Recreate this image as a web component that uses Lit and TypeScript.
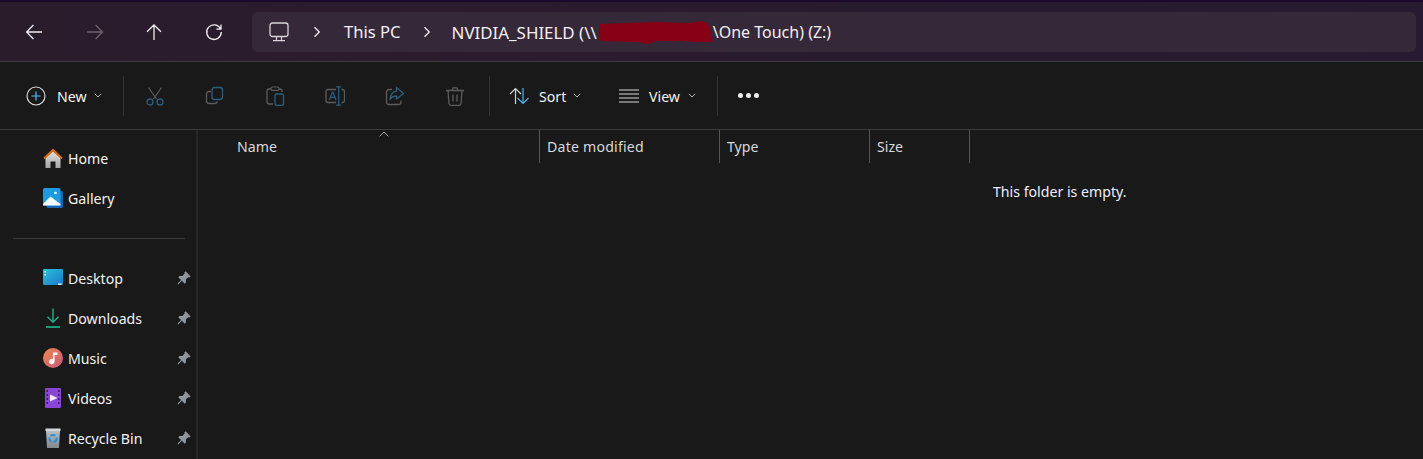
import { LitElement, html, css, svg } from 'lit';
import { customElement } from 'lit/decorators.js';

const GREY = '#5c5c5c';
const TEAL = '#2b5f80';

const icon = (size: number, body: unknown) => html`<svg width=${size} height=${size} viewBox="0 0 ${size} ${size}" fill="none">${body}</svg>`;

const chevDown = html`<svg class="chev" width="8" height="5" viewBox="0 0 8 5" fill="none"><path d="M.8.8 4 4l3.2-3.2" stroke="#b5b5b5" stroke-width="1"/></svg>`;
const crumb = html`<svg class="crumb" width="8" height="12" viewBox="0 0 8 12" fill="none"><path d="M1.5 1.2 6.3 6l-4.8 4.8" stroke="#f0edf0" stroke-width="1.3"/></svg>`;

const navIcons = {
  back: svg`<path d="M2.600 10H18M9.400 3 2.600 10l6.800 7" stroke="currentColor" stroke-width="1.300"/>`,
  forward: svg`<path d="M18.400 10H3M11.600 3l6.800 7-6.800 7" stroke="currentColor" stroke-width="1.300"/>`,
  up: svg`<path d="M10 18V3M3 9.800 10 3l7 6.800" stroke="currentColor" stroke-width="1.300"/>`,
  refresh: svg`<path d="M16.600 7A7.300 7.300 0 1 0 17.300 10M17 2.600V7.200h-4.600" stroke="currentColor" stroke-width="1.300"/>`,
};

const toolIcons = {
  cut: svg`<path d="M3.500 1.500 11.500 13M16.500 1.500 8.500 13" stroke=${GREY} stroke-width="1.200"/><circle cx="5" cy="16" r="3" stroke=${TEAL} stroke-width="1.300"/><circle cx="15" cy="16" r="3" stroke=${TEAL} stroke-width="1.300"/>`,
  copy: svg`<path d="M6 5.500H4A2.500 2.500 0 0 0 1.500 8v7A2.500 2.500 0 0 0 4 17.500h6a2.500 2.500 0 0 0 2.400-2" stroke=${GREY} stroke-width="1.300"/><rect x="7" y="1.500" width="10.500" height="12" rx="2.500" stroke=${TEAL} stroke-width="1.300"/>`,
  paste: svg`<path d="M6 3H3.800A1.800 1.800 0 0 0 2 4.800v11.400A1.800 1.800 0 0 0 3.800 18H8M14 3h1A2 2 0 0 1 17 5v1" stroke=${GREY} stroke-width="1.300"/><rect x="6" y="1" width="8" height="3.400" rx="1.500" stroke=${GREY} stroke-width="1.200"/><rect x="10" y="8" width="8.500" height="11.500" rx="2" stroke=${TEAL} stroke-width="1.300"/>`,
  rename: svg`<path d="M11 3.500H3A2 2 0 0 0 1 5.500v9a2 2 0 0 0 2 2h8M16.500 3.500h1a2 2 0 0 1 2 2v9a2 2 0 0 1-2 2h-1" stroke=${GREY} stroke-width="1.300"/><path d="M13.700.800v18.400M11.300.800h4.800M11.300 19.200h4.800M4.400 14 7.400 6h.6l3 8M5.400 11.400h4.600" stroke=${TEAL} stroke-width="1.200"/>`,
  share: svg`<path d="M7 3.500H4A2.500 2.500 0 0 0 1.500 6v10A2.500 2.500 0 0 0 4 18.500h9.500A2.500 2.500 0 0 0 16 16v-1.500" stroke=${GREY} stroke-width="1.300"/><path d="M11.500 1.500 18.500 7.500 11.500 13V10C8.500 10 6.500 11 5 13.500 5.500 8.500 8 5.500 11.500 5Z" stroke=${TEAL} stroke-width="1.300" stroke-linejoin="round"/>`,
  trash: svg`<path d="M1 4.500h18M7 4.500 8 1.800h4l1 2.700M3 4.500l1 13A2 2 0 0 0 6 19.300h8a2 2 0 0 0 2-1.800l1-13M8 8.500v7M12 8.500v7" stroke=${GREY} stroke-width="1.300"/>`,
};

const pinIcon = html`<svg class="pin" width="14" height="14" viewBox="0 0 14 14"><path d="M8.600.300 13.700 5.400 12.300 6.500 11.200 6.300 8.900 8.600 9 11.400 7.700 12.700 4.800 9.800 1.300 13.400.5 12.600 4.100 9.100 1.200 6.200 2.500 4.900 5.300 5 7.600 2.700 7.400 1.600Z" fill="#8f969c"/></svg>`;

const navArt = {
  home: html`<svg width="20" height="20" viewBox="0 0 20 20"><defs><linearGradient id="hm" x1="0" y1="0" x2="0" y2="1"><stop offset="0" stop-color="#e2e2e2"/><stop offset="1" stop-color="#a3a3a3"/></linearGradient></defs><path d="M2.500 9.500 10 3l7.500 6.500V20h-5V13.500h-5V20h-5Z" fill="url(#hm)"/><path d="M.3 9.800 10 .5l9.700 9.300-1.400 1.400L10 3.600 1.700 11.200Z" fill="#d96a0c"/></svg>`,
  gallery: html`<svg width="20" height="20" viewBox="0 0 20 20"><rect x="3.500" y="3" width="16.500" height="17" rx="1.500" fill="#1766b5"/><rect width="17.500" height="17.500" rx="1.500" fill="#1e9ae0"/><path d="M0 16 7.500 8.500 17.500 16v1.500H0Z" fill="#f4f9fd"/><circle cx="12.500" cy="5" r="1.300" fill="#f4f9fd"/></svg>`,
  desktop: html`<svg width="20" height="20" viewBox="0 0 20 20"><defs><linearGradient id="dk" x1="0" y1="0" x2="1" y2="1"><stop offset="0" stop-color="#2cc0d8"/><stop offset="1" stop-color="#1a78cc"/></linearGradient></defs><rect y="1" width="20" height="16" rx="1" fill="url(#dk)"/><rect x="1.500" y="3" width="1.500" height="1.500" fill="#e8f6fb"/><rect x="1.500" y="6" width="1.500" height="1.500" fill="#e8f6fb"/><rect x="15" y="15.500" width="3.500" height="1.500" fill="#dff"/></svg>`,
  downloads: html`<svg width="20" height="20" viewBox="0 0 20 20" fill="none"><path d="M10 .5v13.500M4.500 8.800 10 14.300l5.500-5.500" stroke="#1fa98a" stroke-width="1.500"/><path d="M3 19h14" stroke="#1fa98a" stroke-width="1.800"/></svg>`,
  music: html`<svg width="20" height="20" viewBox="0 0 20 20"><defs><linearGradient id="mu" x1="0" y1="0" x2="1" y2="1"><stop offset="0" stop-color="#ec8a52"/><stop offset="1" stop-color="#c8567e"/></linearGradient></defs><circle cx="10" cy="10" r="10" fill="url(#mu)"/><path d="M10 4.500h4.500v2.500H11.500v6.500a2.700 2.700 0 1 1-1.500-2.400Z" fill="#fff"/></svg>`,
  videos: html`<svg width="20" height="20" viewBox="0 0 20 20"><rect x="2" width="16" height="20" rx="1" fill="#8a46d8"/><path d="M7 6.500 14.500 10 7 13.500Z" fill="#f2ebfb"/><g fill="#3b1a66"><rect x="3.500" y="2" width="1.500" height="2"/><rect x="3.500" y="6" width="1.500" height="2"/><rect x="3.500" y="10" width="1.500" height="2"/><rect x="3.500" y="14" width="1.500" height="2"/><rect x="15" y="2" width="1.500" height="2"/><rect x="15" y="6" width="1.500" height="2"/><rect x="15" y="10" width="1.500" height="2"/><rect x="15" y="14" width="1.500" height="2"/></g></svg>`,
  bin: html`<svg width="20" height="20" viewBox="0 0 20 20"><defs><linearGradient id="bn" x1="0" y1="0" x2="0" y2="1"><stop offset="0" stop-color="#b9bec2"/><stop offset="1" stop-color="#84888c"/></linearGradient></defs><path d="M3 2.500h14L16 20H4Z" fill="url(#bn)"/><rect x="2.500" y="0.500" width="15" height="2.500" fill="#d4d8da"/><circle cx="10" cy="10.500" r="3.600" fill="none" stroke="#1e90e0" stroke-width="2" stroke-dasharray="5 2"/></svg>`,
};

const topLinks = [
  { label: 'Home', art: navArt.home, pinned: false },
  { label: 'Gallery', art: navArt.gallery, pinned: false },
];
const pinnedLinks = [
  { label: 'Desktop', art: navArt.desktop, pinned: true },
  { label: 'Downloads', art: navArt.downloads, pinned: true },
  { label: 'Music', art: navArt.music, pinned: true },
  { label: 'Videos', art: navArt.videos, pinned: true },
  { label: 'Recycle Bin', art: navArt.bin, pinned: true },
];
const columns = ['Name', 'Date modified', 'Type', 'Size'];

@customElement('app-root')
export class AppRoot extends LitElement {
  static styles = css`
    :host {
      display: block;
      height: 100vh;
      overflow: hidden;
      background: #191919;
      color: #f2f2f2;
      font-family: "Noto Sans", "Open Sans", sans-serif;
      font-size: 14.15px;
    }
    .titlebar {
      display: flex;
      align-items: center;
      height: 59px;
      border-top: 2px solid #1c0a2c;
      border-bottom: 1px solid #3d3a3f;
      background: linear-gradient(90deg, #2b1c2c, #291b2e 60%, #281a30);
    }
    .navs { display: flex; width: 252px; flex: none; padding-left: 4px; box-sizing: border-box; }
    .navbtn { width: 60px; display: flex; justify-content: center; color: #f0eef0; }
    .navbtn.off { color: #6d6470; }
    .address {
      flex: 1;
      margin-right: 7px;
      height: 40px;
      border-radius: 6px;
      background: #352839;
      display: flex;
      align-items: center;
      font-size: 16px;
      color: #f2eff2;
      white-space: nowrap;
    }
    .pc { margin-left: 17px; display: flex; }
    .crumb { flex: none; }
    .crumb.first { margin-left: 24px; }
    .this-pc { margin: 0 22px 0 23px; font-size: 16.6px; }
    .path { margin-left: 21px; display: flex; align-items: center; padding-top: 1px; }
    .drive { font-size: 16.9px; }
    .redact { display: block; flex: none; margin-right: -1px; }
    .toolbar {
      display: flex;
      align-items: center;
      height: 67px;
      border-bottom: 1px solid #3a3a3a;
      box-sizing: content-box;
      padding-left: 26px;
    }
    .new { display: flex; align-items: center; width: 97px; flex: none; }
    .label { margin-left: 11px; padding-top: 1px; }
    .new .chev { margin-left: 7px; }
    .divider { width: 1px; height: 40px; background: #333; flex: none; }
    .tools { display: flex; width: 365px; flex: none; padding-left: 1px; box-sizing: border-box; }
    .tool { width: 60px; display: flex; justify-content: center; }
    .sort { display: flex; align-items: center; margin-left: 19px; width: 110px; flex: none; }
    .sort .label { margin-left: 9px; }
    .sort .chev { margin-left: 7px; }
    .view { display: flex; align-items: center; width: 98px; flex: none; }
    .view .label { margin-left: 10px; }
    .view .chev { margin-left: 8px; }
    .more { display: flex; gap: 3px; margin-left: 20px; }
    .more span { width: 5px; height: 5px; border-radius: 50%; background: #f0f0f0; }
    .body { display: flex; }
    .side {
      flex: none;
      box-sizing: border-box;
      padding-top: 8px;
      height: 340px;
      border-right: 2px solid #262626;
      width: 198px;
    }
    .row { display: flex; align-items: center; height: 40px; padding: 0 5px 0 43px; gap: 5px; }
    .row svg:first-child { flex: none; }
    .pin { margin-left: auto; }
    .sep { height: 1px; margin: 20px 11px 19px 13px; background: #3a3a3a; }
    .main { flex: 1; min-width: 0; }
    .head { display: grid; grid-template-columns: 342px 180px 150px 100px; position: relative; }
    .col {
      height: 33px;
      display: flex;
      align-items: center;
      padding-left: 7px;
      border-right: 1px solid #555;
      color: #d8d8d8;
      box-sizing: border-box;
    }
    .col:first-child { padding-left: 39px; }
    .col:nth-child(2) { letter-spacing: 0.2px; }
    .caret { position: absolute; left: 181px; top: 1px; }
    .empty { margin: 19px 0 0 795px; color: #eef; }
  `;

  renderRow(r: { label: string; art: unknown; pinned: boolean }) {
    return html`<div class="row">${r.art}<span>${r.label}</span>${r.pinned ? pinIcon : null}</div>`;
  }

  render() {
    return html`
      <div class="titlebar">
        <div class="navs">
          <div class="navbtn">${icon(20, navIcons.back)}</div>
          <div class="navbtn off">${icon(20, navIcons.forward)}</div>
          <div class="navbtn">${icon(20, navIcons.up)}</div>
          <div class="navbtn">${icon(20, navIcons.refresh)}</div>
        </div>
        <div class="address">
          <span class="pc"><svg width="20" height="20" viewBox="0 0 20 20" fill="none"><rect x="1" y="1" width="18" height="13.500" rx="2.500" stroke="#d8d4d8" stroke-width="1.300"/><path d="M7.500 14.500v3.500M12.500 14.500v3.500M4 18.600h12" stroke="#d8d4d8" stroke-width="1.200"/></svg></span>
          <svg class="crumb first" width="8" height="12" viewBox="0 0 8 12" fill="none"><path d="M1.500 1.200 6.300 6l-4.800 4.800" stroke="#f0edf0" stroke-width="1.300"/></svg>
          <span class="this-pc">This PC</span>
          ${crumb}
          <span class="path"><span class="drive">NVIDIA_SHIELD (\\\\</span><svg class="redact" width="117" height="24" viewBox="0 0 117 24"><path d="M2 4 30 3 60 2 88 3 100 2C106 0 112 3 113 8L116 22 100 22 84 21 60 21 50 24 40 22 4 21C0 17 3 9 2 4Z" fill="#870016"/></svg>\\One Touch) (Z:)</span>
        </div>
      </div>
      <div class="toolbar">
        <div class="new">
          <svg width="20" height="20" viewBox="0 0 20 20" fill="none"><circle cx="10" cy="10" r="9" stroke="#d8d8d8" stroke-width="1.200"/><path d="M10 5.500v9M5.500 10h9" stroke="#4cc2ff" stroke-width="1.200"/></svg>
          <span class="label">New</span>${chevDown}
        </div>
        <div class="divider"></div>
        <div class="tools">
          ${Object.values(toolIcons).map((b) => html`<div class="tool">${icon(20, b)}</div>`)}
        </div>
        <div class="divider"></div>
        <div class="sort">
          <svg width="21" height="18" viewBox="0 0 21 18" fill="none"><path d="M6.500 17V1.500M1 7l5.500-5.500L12 7" stroke="#d0d0d0" stroke-width="1.200"/><path d="M14 1v15.500M8.500 11l5.500 5.500 5.500-5.500" stroke="#4cb4ee" stroke-width="1.200"/></svg>
          <span class="label">Sort</span>${chevDown}
        </div>
        <div class="view">
          <svg width="20" height="14" viewBox="0 0 20 14" fill="none"><path d="M0 1h20M0 5h20M0 9h20M0 13h20" stroke="#d8d8d8" stroke-width="1.200"/></svg>
          <span class="label">View</span>${chevDown}
        </div>
        <div class="divider"></div>
        <div class="more"><span></span><span></span><span></span></div>
      </div>
      <div class="body">
        <nav class="side">
          ${topLinks.map((r) => this.renderRow(r))}
          <div class="sep"></div>
          ${pinnedLinks.map((r) => this.renderRow(r))}
        </nav>
        <div class="main">
          <div class="head">
            ${columns.map((c) => html`<div class="col">${c}</div>`)}
            <svg class="caret" width="10" height="6" viewBox="0 0 10 6" fill="none"><path d="M.7 5.300 5 1l4.300 4.300" stroke="#a8a8a8" stroke-width="1"/></svg>
          </div>
          <div class="empty">This folder is empty.</div>
        </div>
      </div>
    `;
  }
}
